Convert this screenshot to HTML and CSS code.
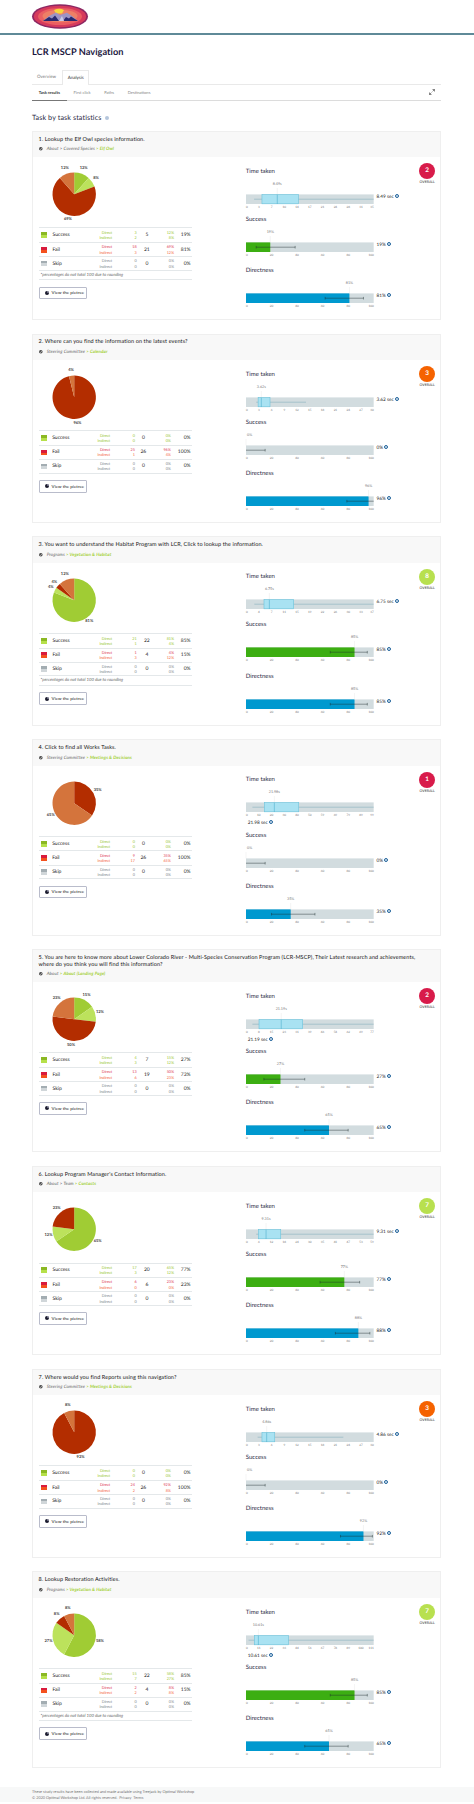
FILE: index.html
```
<!DOCTYPE html>
<html lang="en">
<head>
    <meta charset="UTF-8">
    <meta name="viewport" content="width=device-width, initial-scale=1.0">
    <title>LCR MSCP Navigation</title>
    <link rel="stylesheet" href="styles.css">
</head>
<body>
    <header class="site-header">
        <svg class="logo" viewBox="0 0 56 25">
            <ellipse cx="28" cy="12.5" rx="28" ry="12.3" fill="#8c2763"/>
            <ellipse cx="28" cy="12.5" rx="26.2" ry="10.8" fill="#d63a5c"/>
            <ellipse cx="28" cy="12.5" rx="22" ry="8.6" fill="#ea5f62"/>
            <ellipse cx="28" cy="12" rx="17.5" ry="6.3" fill="#ee8066"/>
            <path d="M22 6 Q27 3.5 32 6 L30 9.5 H24 Z" fill="#f7d63c"/>
            <path d="M11 17 L17 12 L21 10 L24 8.5 L28 11 L31 10 L35 8.8 L40 12 L46 17 Z" fill="#9d94c4"/>
            <path d="M11 17 L17 13 L20 14.5 L23 11.5 L27 17 Z M31 17 L34 13 L37 14.5 L39 12.5 L46 17 Z" fill="#29296f"/>
            <path d="M27 17 L30 12 L32 17 Z" fill="#c9cbe8"/>
        </svg>
    </header>

    <main class="container">
        <h1>LCR MSCP Navigation</h1>

        <nav class="tabs">
            <a class="tab">Overview</a>
            <a class="tab active">Analysis</a>
        </nav>
        <nav class="subtabs">
            <a class="subtab active">Task results</a>
            <a class="subtab">First click</a>
            <a class="subtab">Paths</a>
            <a class="subtab">Destinations</a>
            <svg class="expand" viewBox="0 0 12 12">
                <path d="M7 1h4v4M11 1L7.2 4.8M5 11H1V7M1 11l3.8-3.8" fill="none" stroke="#555" stroke-width="1.4"/>
            </svg>
        </nav>

        <h2>Task by task statistics <span class="hint"></span></h2>

        <div id="tasks"></div>
    </main>

    <footer class="footer">
        <p>These study results have been collected and made available using Treejack by Optimal Workshop</p>
        <p>© 2020 Optimal Workshop Ltd. All rights reserved. &nbsp;Privacy &nbsp;Terms</p>
    </footer>

    <script src="tasks.js"></script>
</body>
</html>
```
FILE: styles.css
```
* {
    margin: 0;
    padding: 0;
    box-sizing: border-box;
}

body {
    font-family: Lato, "Open Sans", sans-serif;
    text-rendering: geometricPrecision;
    background: white;
    color: #2b2b45;
    width: 474px;
    height: 1804px;
    overflow: hidden;
}

svg {
    display: block;
    overflow: visible;
    flex: none;
}

.site-header {
    height: 34.7px;
    padding: 3.8px 32px 0;
    border-bottom: 2px solid #5f8a98;
}

.logo {
    width: 56px;
    height: 25px;
}

.container {
    width: 409px;
    margin-left: 32px;
}

h1 {
    font-size: 9.2px;
    letter-spacing: .05px;
    line-height: 12px;
    font-weight: 700;
    color: #1b1740;
    margin-top: 11px;
}

/* Tabs */
.tabs {
    display: flex;
    height: 14.6px;
    margin-top: 12.3px;
    border-bottom: 1px solid #e9e9e9;
}

.tab {
    height: 14.6px;
    padding: 0 5px;
    font-size: 4.5px;
    line-height: 14px;
    color: #777;
}

.tab.active {
    padding: 0 4.5px;
    margin-left: 1px;
    color: #333;
    background: white;
    border: 1px solid #e9e9e9;
    border-bottom: none;
}

.subtabs {
    display: flex;
    height: 16px;
    border-bottom: 1px solid #dcdcdc;
}

.subtab {
    padding: 0 6.8px;
    font-size: 4.1px;
    line-height: 15px;
    color: #888;
}

.subtab.active {
    font-weight: 700;
    color: #333;
    height: 16px;
    border-bottom: 1px solid #777;
}

.expand {
    width: 6px;
    height: 6px;
    margin: 4.5px 6px 0 auto;
}

h2 {
    display: flex;
    align-items: center;
    gap: 4px;
    font-size: 7.2px;
    letter-spacing: .1px;
    line-height: 10px;
    font-weight: 400;
    margin: 12.3px 0 7.8px;
}

.hint {
    width: 4px;
    height: 4px;
    border-radius: 50%;
    background: #b5c6dc;
}

/* Task card */
.card {
    border: 1px solid #efefef;
    margin-bottom: 13.3px;
}

.card-header {
    background: #f8f8f8;
    padding: 4.9px 5.6px 5.6px;
}

.card-header h3 {
    font-size: 5.5px;
    letter-spacing: .1px;
    line-height: 6.4px;
    font-weight: 400;
    color: #111;
    white-space: nowrap;
}

.crumbs {
    display: flex;
    align-items: center;
    font-size: 4.5px;
    letter-spacing: .08px;
    line-height: 5px;
    margin-top: 3.4px;
    font-style: italic;
    color: #666;
    white-space: pre;
}

.crumbs b {
    color: #a3d037;
}

.check {
    width: 3.6px;
    height: 3.6px;
    margin: 0 4px 0 .5px;
}

.card-body {
    display: flex;
    padding: 0 4.8px .9px 5.6px;
}

.results {
    width: 153.5px;
    margin-right: 53.7px;
}

.pie {
    width: 70px;
    height: 70.5px;
}

.pie text {
    font-size: 4px;
    font-weight: 700;
    fill: #333;
    text-anchor: middle;
}

.row {
    display: grid;
    grid-template-columns: 14px 34px 25.5px 24.5px 20.5px 17px 16.5px;
    align-items: center;
    height: 14.45px;
    border-top: 1px solid #e4e8ea;
    font-size: 5px;
    color: #222;
}

.wide .row {
    grid-template-columns: 13.6px 34px 24px 24.7px 17px 19px 19.7px;
}

.row.last,
.note {
    border-bottom: 1px solid #e4e8ea;
}

.swatch {
    width: 6.3px;
    height: 5.8px;
    margin-left: 2px;
}

.swatch.success { background: linear-gradient(#8bb823 50%, #b6e04a 50%); }
.swatch.fail { background: linear-gradient(#d91b3c 50%, #f4511e 50%); }
.swatch.skip { background: linear-gradient(#a3adb2 50%, #d0d6d9 50%); }

.pair {
    font-size: 3.8px;
    line-height: 5.2px;
    text-align: right;
}

.pair span {
    display: block;
}

.pair.success span { color: #98c62f; }
.pair.fail span { color: #dc3450; }
.pair.fail span + span { color: #f4623a; }
.pair.skip span { color: #7d878c; }

.count {
    text-align: center;
}

.total {
    text-align: right;
}

.note {
    font-size: 4.3px;
    line-height: 8.6px;
    padding-left: 2px;
    font-style: italic;
    color: #666;
}

.btn {
    display: flex;
    align-items: center;
    gap: 3px;
    width: 48.3px;
    height: 12.6px;
    margin-top: 6.3px;
    padding-left: 5px;
    border: 1px solid #b9bccb;
    border-radius: 1px;
    background: white;
    font-family: inherit;
    font-size: 4.5px;
    white-space: nowrap;
    color: #222;
}

.btn svg {
    width: 4px;
    height: 4px;
}

/* Charts */
.charts {
    width: 168px;
    padding-top: 10.8px;
}

.charts h4 {
    font-size: 6px;
    line-height: 8px;
    font-weight: 400;
}

.chart {
    display: flex;
    margin-bottom: 8.8px;
}

.chart.time {
    margin-bottom: 5.5px;
}

.chart svg.plot {
    width: 127.7px;
    height: 34.5px;
}

.chart text {
    font-size: 3.7px;
    fill: #777;
    text-anchor: middle;
}

.chart .tick {
    font-size: 3px;
}

.chart .start { text-anchor: start; }
.chart .end { text-anchor: end; }

.value {
    display: flex;
    align-items: center;
    gap: 1.5px;
    height: 7.2px;
    margin: 16.4px 0 0 3px;
    font-size: 4.7px;
    color: #222;
}

.chart.stacked {
    flex-direction: column;
}

.stacked .value {
    margin: 0 0 0 2px;
}

.value svg {
    width: 4px;
    height: 4px;
}

.score {
    width: 16px;
    margin: 6.2px 0 0 auto;
    text-align: center;
    font-size: 3.5px;
    color: #333;
}

.score b {
    display: block;
    height: 16px;
    margin-bottom: 1px;
    border-radius: 50%;
    font-size: 6.4px;
    line-height: 16px;
    color: white;
}

.score .low { background: #d81b4a; }
.score .mid { background: #f56200; }
.score .high { background: #b8e04f; }

.footer {
    height: 15.3px;
    margin-top: 18.3px;
    padding: 2px 32px 0;
    background: #f7f8f8;
    font-size: 3.85px;
    line-height: 6.7px;
    color: #777;
}
```
FILE: tasks.js
```
// counts: success direct, success indirect, fail direct, fail indirect
// box: whisker start, box start, median, box end, whisker end (percent of the axis)
// success / direct: value, interval start, interval end
const tasks = [
    { title: 'Lookup the Elf Owl species information.', path: 'About > Covered Species', target: 'Elf Owl',
      counts: [3, 2, 18, 3], pct: [19, 81], note: true, score: 2,
      time: '8.49', box: [6.3, 12.5, 24.5, 41, 100], max: 34.6, success: [19, 8, 38.5], direct: [81, 62, 92] },
    { title: 'Where can you find the information on the latest events?', path: 'Steering Committee', target: 'Calendar',
      counts: [0, 0, 25, 1], pct: [0, 100], score: 3,
      time: '3.62', box: [8, 9.5, 12, 18.8, 47], max: 30, success: [0, 0, 15], direct: [96, 79, 100] },
    { title: 'You want to understand the Habitat Program with LCR, Click to lookup the information.', path: 'Programs', target: 'Vegetation & Habitat',
      counts: [21, 1, 1, 3], pct: [85, 15], note: true, score: 8,
      time: '6.75', box: [6.5, 14.1, 18.3, 37.3, 100], max: 37, success: [85, 66, 95], direct: [85, 66, 95] },
    { title: 'Click to find all Works Tasks.', path: 'Steering Committee', target: 'Meetings & Decisions',
      counts: [0, 0, 9, 17], pct: [0, 100], score: 1, stacked: true,
      time: '21.98', box: [5, 14.4, 22.2, 41.3, 100], max: 99, success: [0, 0, 15], direct: [35, 20, 54] },
    { title: 'You are here to know more about Lower Colorado River - Multi-Species Conservation Program (LCR-MSCP), Their Latest research and achievements,<br>where do you think you will find this information?', path: 'About', target: 'About (Landing Page)',
      counts: [4, 3, 13, 6], pct: [27, 73], score: 2, stacked: true,
      time: '21.19', box: [5, 10.2, 27.6, 44.4, 100], max: 77, success: [27, 14, 46], direct: [65, 46, 80] },
    { title: "Lookup Program Manager's Contact Information.", path: 'About > Team', target: 'Contacts',
      counts: [17, 3, 6, 0], pct: [77, 23], score: 7,
      time: '9.31', box: [8, 9.8, 15.7, 27.2, 100], max: 59, success: [77, 58, 89], direct: [88, 70, 97] },
    { title: 'Where would you find Reports using this navigation?', path: 'Steering Committee', target: 'Meetings & Decisions',
      counts: [0, 0, 24, 2], pct: [0, 100], score: 3,
      time: '4.86', box: [9.1, 12.5, 16.2, 22.5, 76.2], max: 30, success: [0, 0, 15], direct: [92, 74, 99] },
    { title: 'Lookup Restoration Activities.', path: 'Programs', target: 'Vegetation & Habitat',
      counts: [15, 7, 2, 2], pct: [85, 15], note: true, score: 7, stacked: true,
      time: '10.61', box: [2, 6.5, 9.7, 33.2, 100], max: 111, success: [85, 66, 95], direct: [65, 46, 80] }
];

const W = 127.7;
const PEOPLE = 26;
const percent = n => Math.round(n / PEOPLE * 100) + '%';

const info = '<svg viewBox="0 0 8 8"><circle cx="4" cy="4" r="3" fill="#dfeaf4" stroke="#20639b" stroke-width="2"/></svg>';
const check = '<svg class="check" viewBox="0 0 8 8"><circle cx="4" cy="4" r="4" fill="#444"/><path d="M2.2 4l1.4 1.5 2.4-3" fill="none" stroke="#fff" stroke-width="1.4"/></svg>';

function pie(counts) {
    const colors = ['#a0cc34', '#bce25c', '#b32d00', '#d4743c'];
    const cx = 35.2, cy = 37.2, r = 21.7;
    let done = 0, slices = '', labels = '';
    counts.forEach((n, i) => {
        if (!n) return;
        const a = done / PEOPLE * 2 * Math.PI;
        done += n;
        const b = done / PEOPLE * 2 * Math.PI;
        const m = (a + b) / 2;
        slices += `<path fill="${colors[i]}" d="M${cx} ${cy}L${cx + r * Math.sin(a)} ${cy - r * Math.cos(a)}A${r} ${r} 0 ${b - a > Math.PI ? 1 : 0} 1 ${cx + r * Math.sin(b)} ${cy - r * Math.cos(b)}Z"/>`;
        labels += `<text x="${cx + 26.5 * Math.sin(m)}" y="${cy - 26.7 * Math.cos(m) + 0.2}">${percent(n)}</text>`;
    });
    return `<svg class="pie" viewBox="0 0 70 70.5">${slices}${labels}</svg>`;
}

function row(type, name, direct, indirect, total) {
    return `<div class="row ${type === 'skip' ? 'last' : ''}">
        <div class="swatch ${type}"></div><div>${name}</div>
        <div class="pair ${type}"><span>Direct</span><span>Indirect</span></div>
        <div class="pair ${type}"><span>${direct}</span><span>${indirect}</span></div>
        <div class="count">${direct + indirect}</div>
        <div class="pair ${type}"><span>${percent(direct)}</span><span>${percent(indirect)}</span></div>
        <div class="total">${total}%</div>
    </div>`;
}

function ticks(max, count) {
    let out = '';
    for (let i = 0; i <= count; i++) {
        const side = i === 0 ? 'start' : i === count ? 'end' : '';
        out += `<text class="tick ${side}" x="${i / count * W}" y="32.4">${Math.round(max * i / count)}</text>`;
    }
    return out;
}

const track = `<rect y="18.4" width="${W}" height="9.6" fill="#d2dcdf"/>`;

function timeChart(t) {
    const [w1, q1, med, q3, w2] = t.box.map(v => v / 100 * W);
    return `<svg class="plot" viewBox="0 0 127.7 34.5">${track}
        <path d="M${w1} 23.2H${w2}" stroke="#8ab2c0" stroke-width=".6"/>
        <rect x="${q1}" y="18.6" width="${q3 - q1}" height="9.2" fill="#a9e2f2" stroke="#6cc3dc" stroke-width=".6"/>
        <path d="M${med} 18.4v9.6" stroke="#4fb0cf" stroke-width=".6"/>
        <path d="M${med} 12v6.4" stroke="#e2e2e2" stroke-width=".4"/>
        <text x="${med}" y="8.9">${t.time}s</text>${ticks(t.max, 10)}</svg>`;
}

function barChart([value, from, to], color) {
    const x = value / 100 * W, a = from / 100 * W, b = to / 100 * W;
    const caps = (from ? `M${a} 21.9v2.6` : '') + (to < 100 ? `M${b} 21.9v2.6` : '');
    return `<svg class="plot" viewBox="0 0 127.7 34.5">${track}
        <rect y="18.4" width="${x}" height="9.6" fill="${color}"/>
        <path d="M${a} 23.2H${b}${caps}" stroke="#1c2c2c" stroke-opacity=".75" stroke-width=".6" fill="none"/>
        <path d="M${x} 12v6.4" stroke="#e2e2e2" stroke-width=".4"/>
        <text class="${value ? '' : 'start'}" x="${value ? x : 1}" y="8.9">${value}%</text>${ticks(100, 5)}</svg>`;
}

document.getElementById('tasks').innerHTML = tasks.map((t, i) => {
    const [sd, si, fd, fi] = t.counts;
    const level = t.score < 3 ? 'low' : t.score < 5 ? 'mid' : 'high';
    return `<section class="card">
        <div class="card-header">
            <h3>${i + 1}. ${t.title}</h3>
            <div class="crumbs">${check}${t.path} <b>&gt; ${t.target}</b></div>
        </div>
        <div class="card-body">
            <div class="results ${t.pct[1] === 100 ? 'wide' : ''}">
                ${pie(t.counts)}
                ${row('success', 'Success', sd, si, t.pct[0])}
                ${row('fail', 'Fail', fd, fi, t.pct[1])}
                ${row('skip', 'Skip', 0, 0, 0)}
                ${t.note ? '<div class="note">*percentages do not total 100 due to rounding</div>' : ''}
                <button class="btn"><svg viewBox="0 0 8 8"><circle cx="4" cy="4" r="4" fill="#1b1b2e"/><path d="M4.4 3.6V0A4 4 0 0 1 8 3.6Z" fill="#9a9ab0"/></svg>View the pietree</button>
            </div>
            <div class="charts">
                <h4>Time taken</h4>
                <div class="chart time ${t.stacked ? 'stacked' : ''}">${timeChart(t)}<div class="value">${t.time} sec ${info}</div></div>
                <h4>Success</h4>
                <div class="chart">${barChart(t.success, '#3cae12')}<div class="value">${t.success[0]}% ${info}</div></div>
                <h4>Directness</h4>
                <div class="chart">${barChart(t.direct, '#0099cf')}<div class="value">${t.direct[0]}% ${info}</div></div>
            </div>
            <div class="score"><b class="${level}">${t.score}</b>OVERALL</div>
        </div>
    </section>`;
}).join('');
```
